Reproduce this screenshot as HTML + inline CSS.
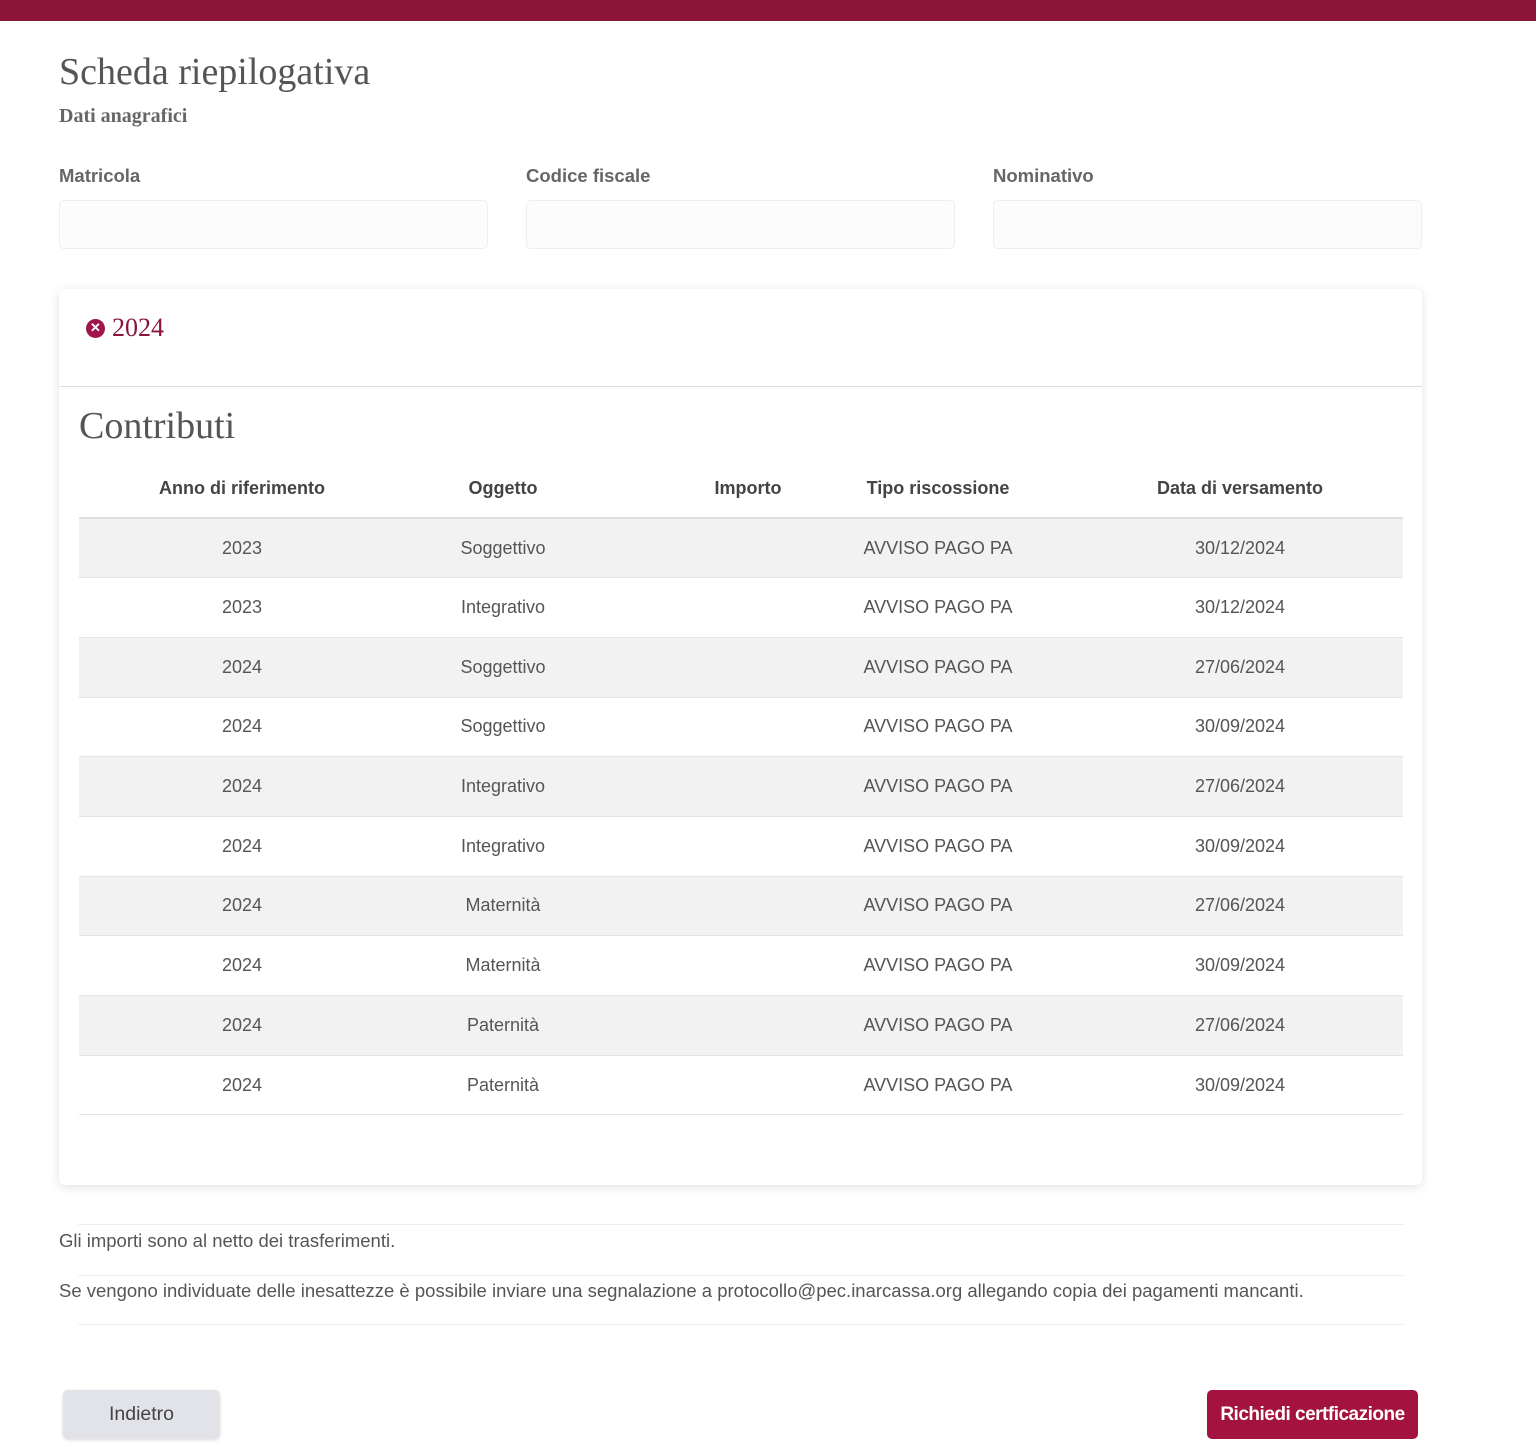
<!DOCTYPE html>
<html><head><meta charset="utf-8"><style>
*{box-sizing:border-box;margin:0;padding:0}
body{width:1536px;height:1449px;background:#fff;font-family:"Liberation Sans",sans-serif;color:#555;position:relative;overflow:hidden}
.top{position:absolute;left:0;top:0;width:1536px;height:21px;background:#8a1538}
.abs{position:absolute}
h1{position:absolute;left:59px;top:50px;font:400 38px "Liberation Serif",serif;color:#555}
.sub{left:59px;top:105px;font:700 20px "Liberation Serif",serif;color:#666}
.lbl{top:165px;font-weight:700;font-size:18.5px;color:#666}
.inp{top:200px;height:49px;border:1px solid #eee;border-radius:5px;background:#fcfcfd}
.card{left:59px;top:289px;width:1363px;height:896px;background:#fff;border-radius:6px;box-shadow:0 2px 10px rgba(0,0,0,.12)}
.yr{left:86px;top:313px;font:400 26px "Liberation Serif",serif;color:#8a1538;display:flex;align-items:center;gap:7px}
.ic{width:19px;height:19px;border-radius:50%;background:#a0154a;color:#fff;font:700 13px "Liberation Sans";display:flex;align-items:center;justify-content:center}
.hr{left:59px;top:386px;width:1363px;height:1px;background:#ddd}
h2{position:absolute;left:79px;top:404px;font:400 38px "Liberation Serif",serif;color:#555}
table{position:absolute;left:79px;top:460px;width:1324px;border-collapse:collapse;table-layout:fixed;font-size:18px;white-space:nowrap}
th{height:58px;font-weight:700;color:#444;border-bottom:2px solid #ddd}
td{height:59.7px;text-align:center;color:#555;border-bottom:1px solid #e4e4e4}
.c4 span{position:relative;left:-48px}
tr.s td{background:#f2f2f2}
.note{left:59px;font-size:18.5px;color:#555}
.line{left:78px;width:1326px;height:1px;background:#eee}
.btn1{left:63px;top:1390px;width:157px;height:49px;background:#e1e3e8;border-radius:5px;font-size:19.5px;color:#444;display:flex;align-items:center;justify-content:center;box-shadow:0 1px 3px rgba(0,0,0,.15)}
.btn2{left:1207px;top:1390px;width:211px;height:49px;background:#a4123f;border-radius:5px;font-size:19px;color:#fff;font-weight:700;display:flex;align-items:center;justify-content:center;letter-spacing:-0.5px}
</style></head><body>
<div class="top"></div>
<h1>Scheda riepilogativa</h1>
<div class="abs sub">Dati anagrafici</div>
<div class="abs lbl" style="left:59px">Matricola</div>
<div class="abs lbl" style="left:526px">Codice fiscale</div>
<div class="abs lbl" style="left:993px">Nominativo</div>
<div class="abs inp" style="left:59px;width:429px"></div>
<div class="abs inp" style="left:526px;width:429px"></div>
<div class="abs inp" style="left:993px;width:429px"></div>
<div class="abs card"></div>
<div class="abs yr"><span class="ic">✕</span>2024</div>
<div class="abs hr"></div>
<h2>Contributi</h2>
<table>
<colgroup><col style="width:326px"><col style="width:196px"><col style="width:294px"><col style="width:182px"><col style="width:326px"></colgroup>
<tr><th>Anno di riferimento</th><th>Oggetto</th><th>Importo</th><th class="c4"><span>Tipo riscossione</span></th><th>Data di versamento</th></tr>
<tr class="s"><td>2023</td><td>Soggettivo</td><td></td><td class="c4"><span>AVVISO PAGO PA</span></td><td>30/12/2024</td></tr>
<tr><td>2023</td><td>Integrativo</td><td></td><td class="c4"><span>AVVISO PAGO PA</span></td><td>30/12/2024</td></tr>
<tr class="s"><td>2024</td><td>Soggettivo</td><td></td><td class="c4"><span>AVVISO PAGO PA</span></td><td>27/06/2024</td></tr>
<tr><td>2024</td><td>Soggettivo</td><td></td><td class="c4"><span>AVVISO PAGO PA</span></td><td>30/09/2024</td></tr>
<tr class="s"><td>2024</td><td>Integrativo</td><td></td><td class="c4"><span>AVVISO PAGO PA</span></td><td>27/06/2024</td></tr>
<tr><td>2024</td><td>Integrativo</td><td></td><td class="c4"><span>AVVISO PAGO PA</span></td><td>30/09/2024</td></tr>
<tr class="s"><td>2024</td><td>Maternità</td><td></td><td class="c4"><span>AVVISO PAGO PA</span></td><td>27/06/2024</td></tr>
<tr><td>2024</td><td>Maternità</td><td></td><td class="c4"><span>AVVISO PAGO PA</span></td><td>30/09/2024</td></tr>
<tr class="s"><td>2024</td><td>Paternità</td><td></td><td class="c4"><span>AVVISO PAGO PA</span></td><td>27/06/2024</td></tr>
<tr><td>2024</td><td>Paternità</td><td></td><td class="c4"><span>AVVISO PAGO PA</span></td><td>30/09/2024</td></tr>
</table>
<div class="abs line" style="top:1224px"></div>
<div class="abs note" style="top:1230px">Gli importi sono al netto dei trasferimenti.</div>
<div class="abs line" style="top:1275px"></div>
<div class="abs note" style="top:1280px">Se vengono individuate delle inesattezze è possibile inviare una segnalazione a protocollo@pec.inarcassa.org allegando copia dei pagamenti mancanti.</div>
<div class="abs line" style="top:1324px"></div>
<div class="abs btn1">Indietro</div>
<div class="abs btn2">Richiedi certficazione</div>
</body></html>
